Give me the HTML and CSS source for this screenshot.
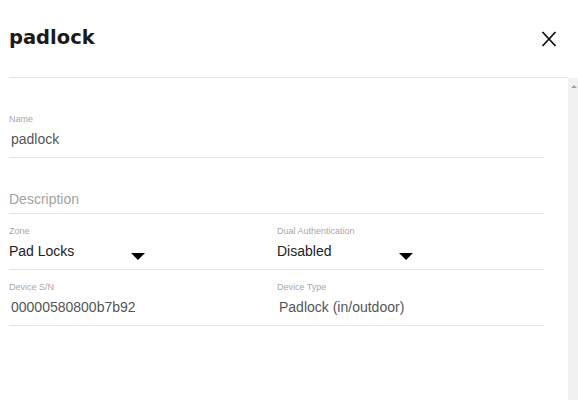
FILE: index.html
```html
<!DOCTYPE html>
<html>
<head>
<meta charset="utf-8">
<link rel="stylesheet" href="styles.css">
</head>
<body>
<div class="dialog">
  <header class="header">
    <h1 class="title">padlock</h1>
    <button class="close" aria-label="Close">
      <svg width="16" height="16" viewBox="0 0 16 16"><path d="M1.5 1 L14.5 15 M14.5 1 L1.5 15" stroke="#111" stroke-width="1.8" fill="none"/></svg>
    </button>
  </header>
  <div class="body">
    <div class="content">
      <div class="form">
        <div class="field">
          <div class="label">Name</div>
          <div class="value muted indent">padlock</div>
        </div>
        <div class="field">
          <div class="label"></div>
          <div class="value placeholder desc">Description</div>
        </div>
        <div class="row">
          <div class="field col">
            <div class="label">Zone</div>
            <div class="select">
              <span class="value dark">Pad Locks</span>
              <span class="caret"></span>
            </div>
          </div>
          <div class="field col">
            <div class="label">Dual Authentication</div>
            <div class="select">
              <span class="value dark">Disabled</span>
              <span class="caret"></span>
            </div>
          </div>
        </div>
        <div class="row">
          <div class="field col">
            <div class="label">Device S/N</div>
            <div class="value muted indent">00000580800b7b92</div>
          </div>
          <div class="field col">
            <div class="label">Device Type</div>
            <div class="value muted indent">Padlock (in/outdoor)</div>
          </div>
        </div>
      </div>
    </div>
    <div class="scrollbar"><span class="scroll-up"></span></div>
  </div>
</div>
</body>
</html>
```
FILE: styles.css
```css
html, body {
  margin: 0;
  padding: 0;
  background: #fff;
  height: 100%;
}
body {
  font-family: "Liberation Sans", Arial, sans-serif;
  overflow: hidden;
}
.dialog {
  display: flex;
  flex-direction: column;
  height: 400px;
}
.header {
  display: flex;
  align-items: center;
  justify-content: space-between;
  height: 77px;
  margin: 0 10px 0 9px;
  border-bottom: 1px solid #e3e3e3;
  box-sizing: content-box;
}
.title {
  margin: 0;
  font-family: "DejaVu Sans", Verdana, sans-serif;
  font-weight: bold;
  font-size: 19.5px;
  color: #1a1a1a;
  position: relative;
  top: -1px;
}
.close {
  border: 0;
  background: none;
  padding: 0;
  margin-right: 11px;
  width: 16px;
  height: 16px;
  display: flex;
  align-items: center;
  justify-content: center;
}
.body {
  flex: 1;
  display: flex;
}
.content {
  flex: 1;
  padding: 24px 0 0 9px;
}
.form {
  width: 535px;
}
.row {
  display: flex;
}
.col {
  flex: 0 0 268px;
}
.col:last-child {
  flex: 1;
}
.field {
  padding: 11px 0 8px;
  border-bottom: 1px solid #e3e3e3;
}
.label {
  font-size: 9px;
  line-height: 12px;
  height: 12px;
  color: #a8a8a8;
}
.value {
  display: block;
  font-size: 14px;
  line-height: 20px;
  height: 20px;
  margin-top: 4px;
  white-space: nowrap;
}
.muted {
  color: #555;
}
.dark {
  color: #222;
}
.indent {
  padding-left: 2px;
}
.placeholder {
  color: #a3a3a3;
}
.desc {
  margin-top: 8px;
  margin-bottom: -4px;
}
.select {
  display: flex;
  justify-content: space-between;
  width: 136px;
}
.caret {
  width: 0;
  height: 0;
  border-left: 7.5px solid transparent;
  border-right: 7.5px solid transparent;
  border-top: 7px solid #000;
  margin-top: 16px;
}
.scrollbar {
  width: 10px;
  background: #f1f1f1;
  position: relative;
}
.scroll-up {
  position: absolute;
  top: 7px;
  left: 3px;
  width: 0;
  height: 0;
  border-left: 3px solid transparent;
  border-right: 3px solid transparent;
  border-bottom: 3px solid #a3a3a3;
}
```
